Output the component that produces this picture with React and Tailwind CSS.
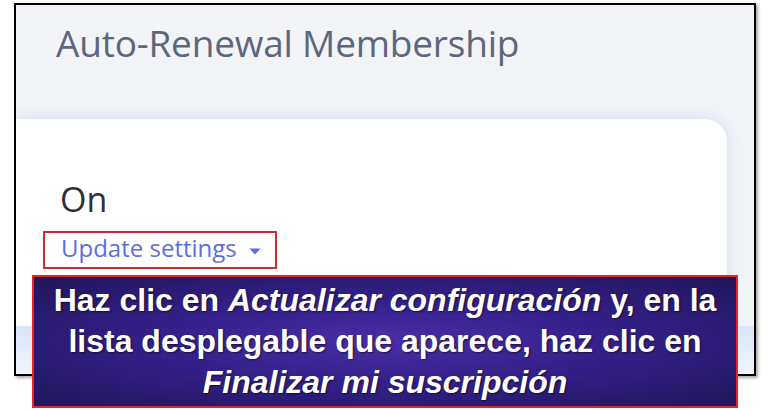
import React from "react";

const CaretDown = () => (
  <svg width="12" height="7" viewBox="0 0 12 7" className="ml-[12px] mt-[2px]">
    <path d="M0.5 0.5 L11.5 0.5 L6 6.5 Z" fill="#5b6fdc" />
  </svg>
);

export default function App() {
  return (
    <div className="relative w-[768px] h-[410px] overflow-hidden bg-white">
      {/* screenshot frame */}
      <div className="ml-[14px] mt-[3px] w-[742px] h-[373px] border-2 border-black bg-[#f3f4f8] overflow-hidden flex flex-col shadow-[2px_2px_3px_rgba(0,0,0,0.35)] font-['Open_Sans',sans-serif]">
        <h1 className="pl-[40px] pt-[19px] text-[37px] leading-none text-[#5c677d] tracking-[-0.2px]">
          Auto-Renewal Membership
        </h1>

        <div className="mt-[58px] w-[711px] h-[207px] shrink-0 bg-white rounded-tr-[22px] shadow-[0_0_14px_rgba(170,182,240,0.45)]">
          <div className="pl-[44px] pt-[63px] text-[34px] leading-none text-[#2f3034]">On</div>
          <div className="ml-[27px] mt-[15px] inline-flex items-center h-[38px] border-2 border-[#d9252d] pl-[16px] pr-[14px]">
            <span className="text-[24px] leading-none text-[#5b6fdc] -mt-[4px]">Update settings</span>
            <CaretDown />
          </div>
        </div>

        <div className="flex-1 bg-gradient-to-b from-[#d9e5f8] to-[#f1f4fb]" />
      </div>

      {/* caption overlay */}
      <div className="absolute left-[32px] top-[275px] w-[706px] h-[133px] border-2 border-[#e3262d] bg-[radial-gradient(ellipse_at_center,#4b2ea8_0%,#34208a_45%,#21155a_100%)] flex items-center justify-center">
        <p className="text-center text-white font-bold text-[32px] leading-[41px] font-['Liberation_Sans',Arial,sans-serif] [text-shadow:1px_1px_2px_rgba(0,0,0,0.6)]">
          Haz clic en <em>Actualizar configuración</em> y, en la
          <br />
          lista desplegable que aparece, haz clic en
          <br />
          <em>Finalizar mi suscripción</em>
        </p>
      </div>
    </div>
  );
}
